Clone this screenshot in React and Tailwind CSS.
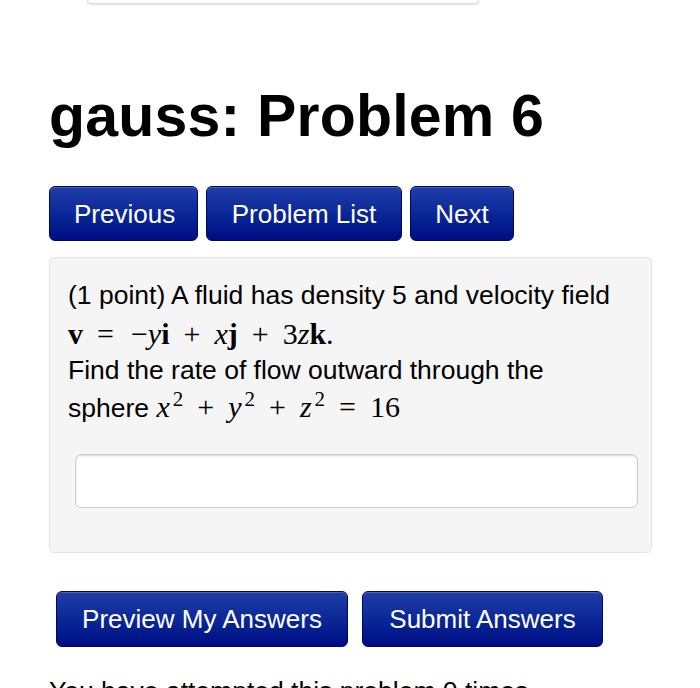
import React from 'react';

const btn =
  'rounded-[6px] border border-[#00065e] bg-gradient-to-b from-[#1f3da9] to-[#000a84] px-[24px] text-white text-[26px] leading-none shadow-[inset_0_1px_0_rgba(255,255,255,0.2)]';

const mathFont = { fontFamily: '"Liberation Serif", "Times New Roman", serif' };

function V({ children }) {
  return <span className="italic">{children}</span>;
}

function B({ children }) {
  return <span className="font-bold">{children}</span>;
}

function Op({ children }) {
  return <span className="mx-[14px]">{children}</span>;
}

function Sq() {
  return <sup className="ml-[3px] text-[21px]">2</sup>;
}

export default function App() {
  return (
    <div
      className="w-[700px] h-[688px] overflow-hidden bg-white text-black"
      style={{ fontFamily: '"Liberation Sans", Arial, sans-serif' }}
    >
      {/* cut-off element at the very top */}
      <div className="ml-[87px] w-[392px] h-[4px] rounded-b-[4px] border border-t-0 border-[#dcdcdc] shadow-[0_1px_2px_rgba(0,0,0,0.12)]" />

      <div className="pl-[49px]">
        <h1 className="mt-[83px] text-[59px] font-bold leading-none tracking-[0.2px]">
          gauss: Problem 6
        </h1>

        <div className="mt-[40px] flex gap-[8px]">
          <button className={`${btn} h-[55px] w-[149px]`}>Previous</button>
          <button className={`${btn} h-[55px] w-[196px]`}>Problem List</button>
          <button className={`${btn} h-[55px] w-[104px]`}>Next</button>
        </div>

        <div className="mt-[16px] w-[603px] rounded-[5px] border border-[#e3e3e3] bg-[#f5f5f5] pl-[18px] pr-[14px] pt-[19px] pb-[44px]">
          <div className="text-[26.5px] leading-[37.5px]">
            <div>(1 point) A fluid has density 5 and velocity field</div>
            <div className="h-[37.5px] text-[30px] leading-[37.5px]" style={mathFont}>
              <B>v</B>
              <Op>=</Op>
              <span className="ml-[3px]">−</span>
              <V>y</V>
              <B>i</B>
              <Op>+</Op>
              <V>x</V>
              <B>j</B>
              <Op>+</Op>
              <span>3</span>
              <V>z</V>
              <B>k</B>
              <span>.</span>
            </div>
            <div>Find the rate of flow outward through the</div>
            <div className="h-[37.5px]">
              sphere{' '}
              <span className="text-[30px] leading-none" style={mathFont}>
                <V>x</V>
                <Sq />
                <Op>+</Op>
                <V>y</V>
                <Sq />
                <Op>+</Op>
                <V>z</V>
                <Sq />
                <Op>=</Op>
                <span>16</span>
              </span>
            </div>
          </div>

          <input
            type="text"
            className="mt-[27px] ml-[7px] block h-[54px] w-[563px] rounded-[6px] border border-[#cccccc] bg-white shadow-[inset_0_1px_2px_rgba(0,0,0,0.15)] outline-none"
          />
        </div>

        <div className="mt-[38px] ml-[7px] flex gap-[14px]">
          <button className={`${btn} h-[56px] w-[292px]`}>Preview My Answers</button>
          <button className={`${btn} h-[56px] w-[241px]`}>Submit Answers</button>
        </div>

        <div className="mt-[26px] text-[26.5px] leading-[37.5px]">
          You have attempted this problem 0 times.
        </div>
      </div>
    </div>
  );
}
